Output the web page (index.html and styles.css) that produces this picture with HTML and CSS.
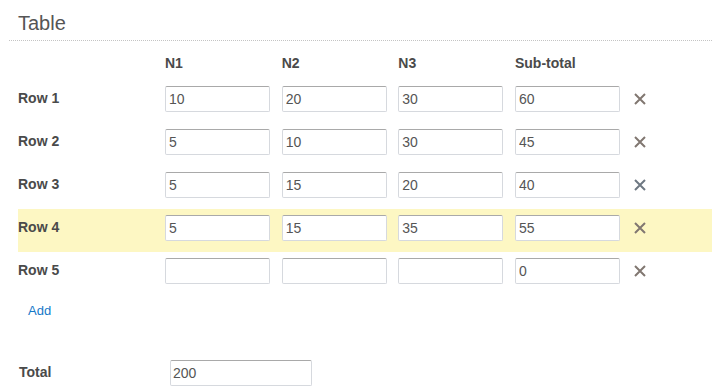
FILE: index.html
```html
<!DOCTYPE html>
<html lang="en">

  <head>
    <meta charset="UTF-8">
    <meta name="viewport" content="width=device-width, initial-scale=1.0">
    <title>Table</title>
    <link rel="stylesheet" href="styles.css">
  </head>

  <body>
    <div class="page">
      <h2 class="title">Table</h2>

      <div class="sheet">
        <!-- column headers -->
        <div class="row head">
          <span></span>
          <span class="col">N1</span>
          <span class="col">N2</span>
          <span class="col">N3</span>
          <span class="col">Sub-total</span>
          <span></span>
        </div>

        <div class="row">
          <span class="label">Row 1</span>
          <input class="cell" value="10">
          <input class="cell" value="20">
          <input class="cell" value="30">
          <input class="cell" value="60">
          <span class="remove"><svg viewBox="0 0 12 12"><path d="M1 1L11 11M11 1L1 11"/></svg></span>
        </div>

        <div class="row">
          <span class="label">Row 2</span>
          <input class="cell" value="5">
          <input class="cell" value="10">
          <input class="cell" value="30">
          <input class="cell" value="45">
          <span class="remove"><svg viewBox="0 0 12 12"><path d="M1 1L11 11M11 1L1 11"/></svg></span>
        </div>

        <div class="row">
          <span class="label">Row 3</span>
          <input class="cell" value="5">
          <input class="cell" value="15">
          <input class="cell" value="20">
          <input class="cell" value="40">
          <span class="remove cool"><svg viewBox="0 0 12 12"><path d="M1 1L11 11M11 1L1 11"/></svg></span>
        </div>

        <!-- hovered row -->
        <div class="row active">
          <span class="label">Row 4</span>
          <input class="cell" value="5">
          <input class="cell" value="15">
          <input class="cell" value="35">
          <input class="cell" value="55">
          <span class="remove"><svg viewBox="0 0 12 12"><path d="M1 1L11 11M11 1L1 11"/></svg></span>
        </div>

        <div class="row">
          <span class="label">Row 5</span>
          <input class="cell" value="">
          <input class="cell" value="">
          <input class="cell" value="">
          <input class="cell" value="0">
          <span class="remove"><svg viewBox="0 0 12 12"><path d="M1 1L11 11M11 1L1 11"/></svg></span>
        </div>

        <a class="add" href="#">Add</a>

        <div class="total">
          <span class="label">Total</span>
          <input class="cell wide" value="200">
        </div>
      </div>
    </div>
  </body>

</html>
```

FILE: styles.css
```css
body {
  margin: 0;
  padding: 0;
  overflow: hidden;
  font-family: "Liberation Sans", Arial, sans-serif;
  color: #4d4d4d;
  background: #fff;
}

.page {
  padding: 12px 0 0 9px;
}

.title {
  margin: 0;
  padding: 0 9px 6px;
  font-size: 20px;
  font-weight: normal;
  line-height: 22px;
  color: #555;
  border-bottom: 1px dotted #c4c4c4;
}

.sheet {
  margin-left: 9px;
}

.row {
  display: grid;
  /* label column, four value columns, then the remove icon */
  grid-template-columns: 147px repeat(4, 116.67px) 1fr;
  align-items: center;
  height: 43px;
  box-sizing: border-box;
  padding: 6px 0 11px;
}

.row.head {
  height: 39px;
  padding: 14px 0 9px;
  align-items: start;
}

.row.active {
  background: #fdf7c3;
}

.col,
.label {
  font-size: 14px;
  font-weight: bold;
  line-height: 16px;
  color: #4a4a4a;
}

/* labels sit a little above the input text */
.row .label,
.total .label {
  margin-bottom: 3px;
}

.cell {
  width: 105px;
  height: 26px;
  box-sizing: border-box;
  margin: 0;
  padding: 0 3px;
  font-family: "Liberation Sans", Arial, sans-serif;
  font-size: 14px;
  color: #555;
  background: #fff;
  border: 1px solid #d6d9de;
  border-top-color: #a9a9a9;
  border-radius: 2px;
  outline: none;
}

.remove {
  display: flex;
  padding-left: 2px;
}

.remove svg {
  width: 12px;
  height: 12px;
  fill: none;
  stroke: #817771;
  stroke-width: 2;
}

.remove.cool svg {
  stroke: #6e7882;
}

.add {
  display: inline-block;
  margin: 8px 0 0 10px;
  font-size: 13px;
  line-height: 16px;
  color: #1478c8;
  text-decoration: none;
}

.total {
  display: flex;
  align-items: center;
  margin-top: 41px;
  padding-left: 1px;
}

.total .label {
  width: 151px;
}

.cell.wide {
  width: 142px;
  padding-left: 2px;
}
```
